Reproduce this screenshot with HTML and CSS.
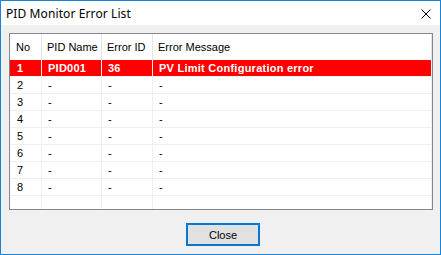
FILE: index.html
```html
<!DOCTYPE html>
<html lang="en">
<head>
  <meta charset="UTF-8">
  <title>PID Monitor Error List</title>
  <link rel="stylesheet" href="styles.css">
</head>

<body>
  <div class="window">
    <!-- Title bar -->
    <div class="titlebar">
      <span class="title">PID Monitor Error List</span>
      <span class="close-x">
        <svg width="10" height="10" viewBox="0 0 10 10">
          <path d="M0.5 0.5 L9.5 9.5 M9.5 0.5 L0.5 9.5" stroke="#000" stroke-width="1" fill="none" />
        </svg>
      </span>
    </div>

    <!-- Client area -->
    <div class="client">
      <div class="listview">
        <div class="row head">
          <div class="cell">No</div>
          <div class="cell">PID Name</div>
          <div class="cell">Error ID</div>
          <div class="cell">Error Message</div>
        </div>
        <div class="row selected">
          <div class="cell">1</div>
          <div class="cell">PID001</div>
          <div class="cell">36</div>
          <div class="cell">PV Limit Configuration error</div>
        </div>
        <div class="row"><div class="cell">2</div><div class="cell">-</div><div class="cell">-</div><div class="cell">-</div></div>
        <div class="row"><div class="cell">3</div><div class="cell">-</div><div class="cell">-</div><div class="cell">-</div></div>
        <div class="row"><div class="cell">4</div><div class="cell">-</div><div class="cell">-</div><div class="cell">-</div></div>
        <div class="row"><div class="cell">5</div><div class="cell">-</div><div class="cell">-</div><div class="cell">-</div></div>
        <div class="row"><div class="cell">6</div><div class="cell">-</div><div class="cell">-</div><div class="cell">-</div></div>
        <div class="row"><div class="cell">7</div><div class="cell">-</div><div class="cell">-</div><div class="cell">-</div></div>
        <div class="row"><div class="cell">8</div><div class="cell">-</div><div class="cell">-</div><div class="cell">-</div></div>
        <div class="row empty"><div class="cell"></div><div class="cell"></div><div class="cell"></div><div class="cell"></div></div>
      </div>

      <div class="buttons">
        <button class="btn">Close</button>
      </div>
    </div>
  </div>
</body>
</html>
```

FILE: styles.css
```css
body {
  margin: 0;
  font-family: "Liberation Sans", Arial, sans-serif;
  font-size: 11px;
  color: #000;
}
.window {
  width: 441px;
  height: 255px;
  box-sizing: border-box;
  border: 1px solid #1883d7;
  display: flex;
  flex-direction: column;
  background-color: #f0f0f0;
}
.titlebar {
  height: 24px;
  background-color: #fff;
  display: flex;
  align-items: center;
  justify-content: space-between;
  padding: 0 9px 0 5px;
  flex-shrink: 0;
}
.title {
  font-family: "Noto Sans", sans-serif;
  font-size: 12px;
  letter-spacing: 0.1px;
}
.close-x {
  display: flex;
  margin-top: 1px;
}
.client {
  flex: 1;
  display: flex;
  flex-direction: column;
  padding: 8px 7px 0 8px;
}
.listview {
  height: 177px;
  box-sizing: border-box;
  border: 1px solid #828790;
  background-color: #fff;
  overflow: hidden;
}
.row {
  display: grid;
  grid-template-columns: 32px 60px 51px 1fr;
  height: 17px;
}
.cell {
  border-right: 1px solid #f0f0f0;
  border-bottom: 1px solid #f0f0f0;
  padding-left: 6px;
  line-height: 16px;
  white-space: nowrap;
  overflow: hidden;
}
.row .cell:first-child {
  padding-left: 7px;
}
.row.head {
  height: 26px;
}
.row.head .cell {
  line-height: 26px;
  border-bottom: none;
  border-right-color: #e5e5e5;
  padding-left: 5px;
}
.row.head .cell:first-child {
  padding-left: 6px;
}
.row.selected .cell {
  background-color: #ff0000;
  color: #fff;
  font-weight: bold;
  letter-spacing: 0.25px;
}
.row.empty {
  height: 20px;
}
.buttons {
  display: flex;
  justify-content: center;
  padding: 13px 0 0 4px;
}
.btn {
  width: 74px;
  height: 23px;
  box-sizing: border-box;
  border: 2px solid #0078d7;
  background-color: #e1e1e1;
  font-family: "Liberation Sans", Arial, sans-serif;
  font-size: 11px;
  color: #000;
  padding: 0;
}
```
